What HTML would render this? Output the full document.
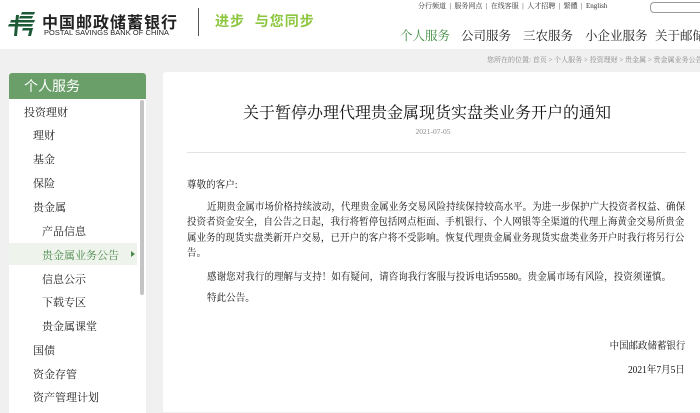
<!DOCTYPE html>
<html><head><meta charset="utf-8"><style>
*{margin:0;padding:0;box-sizing:border-box}
body{width:700px;height:409px;overflow:hidden;background:#f0f0f0;font-family:"Liberation Serif","Noto Serif CJK SC",serif;position:relative;color:#222}
.a{position:absolute;white-space:nowrap}
.hdr{position:absolute;left:0;top:0;width:700px;height:49px;background:#fff}
.sans{font-family:"Liberation Sans","Noto Sans CJK SC",sans-serif}
.side{position:absolute;left:9px;top:73px;width:137px;height:340px;background:#fff;border-radius:3px 3px 0 0;overflow:hidden}
.sh{height:26px;background:#6a9f6a;color:#fff;font-size:14px;line-height:26px;padding-left:15px;font-family:"Liberation Sans","Noto Sans CJK SC",sans-serif}
.si{position:absolute;font-size:11px;color:#222}
.main{position:absolute;left:163px;top:72px;width:537px;height:340px;background:#fff;border-radius:3px 0 0 0;overflow:hidden}
.l{position:absolute;left:24px;font-size:10.3px;letter-spacing:.1px;line-height:15.5px;color:#111;white-space:nowrap;transform:scaleX(.92);transform-origin:0 0}
.r{transform:scaleX(.92);transform-origin:100% 0}
</style></head><body>
<div class="hdr">
<svg class="a" style="left:8px;top:11px" width="28" height="26" viewBox="0 0 28 26">
<g fill="#1d5a38">
<polygon points="14,1 27,1 26,3.5 13,3.5"/>
<polygon points="12,5 25,5 24,7.5 11,7.5"/>
<polygon points="3,9 27,9 26,11.5 2,11.5"/>
<polygon points="1,13 25,13 24,15.5 0,15.5"/>
<polygon points="8,4 11,4 9,25 6,25"/>
<polygon points="15,17 25,17 24,19.5 14,19.5"/>
<polygon points="22,17 25,17 23,25 20,25"/>
</g></svg>
<div class="a sans" style="left:42px;top:9px;font-size:16px;font-weight:bold;letter-spacing:1px;color:#222">中国邮政储蓄银行</div>
<div class="a sans" style="left:44px;top:28px;font-size:7.4px;color:#222;letter-spacing:.1px">POSTAL SAVINGS BANK OF CHINA</div>
<div class="a" style="left:198px;top:8px;width:1px;height:28px;background:#555"></div>
<div class="a sans" style="left:215px;top:11px;font-size:14px;font-weight:bold;color:#8dc63f;letter-spacing:1px">进步&nbsp; 与您同步</div>
<div class="a" style="left:418px;top:1px;font-size:7px;color:#333">分行频道 &nbsp;|&nbsp; 服务网点 &nbsp;|&nbsp; 在线客服 &nbsp;|&nbsp; 人才招聘 &nbsp;|&nbsp; 繁體 &nbsp;|&nbsp; English</div>
<div class="a" style="left:650px;top:2px;width:60px;height:11px;border:1px solid #999;border-radius:4px"></div>
<div class="a" style="left:400px;top:26px;font-size:12.5px;color:#3c8a3c">个人服务</div>
<div class="a" style="left:461px;top:26px;font-size:12.5px;color:#222">公司服务</div>
<div class="a" style="left:523px;top:26px;font-size:12.5px;color:#222">三农服务</div>
<div class="a" style="left:585px;top:26px;font-size:12.5px;color:#222">小企业服务</div>
<div class="a" style="left:655px;top:26px;font-size:12.5px;color:#222">关于邮储</div>
</div>
<div class="a" style="left:487px;top:55px;font-size:7px;color:#888">您所在的位置: 首页 &gt; 个人服务 &gt; 投资理财 &gt; 贵金属 &gt; 贵金属业务公告</div>
<div class="side">
<div class="sh">个人服务</div>
<div class="a" style="left:0;top:170px;width:128px;height:22px;background:#eef3ec"></div>
<div class="a" style="left:131px;top:27px;width:4px;height:195px;background:#c4c4c4;border-radius:2px"></div>
<div class="si" style="left:15px;top:31px">投资理财</div>
<div class="si" style="left:24px;top:54px">理财</div>
<div class="si" style="left:24px;top:78px">基金</div>
<div class="si" style="left:24px;top:102px">保险</div>
<div class="si" style="left:24px;top:126px">贵金属</div>
<div class="si" style="left:33px;top:150px">产品信息</div>
<div class="si" style="left:33px;top:174px;color:#4a8a4a">贵金属业务公告</div>
<div class="a" style="left:122px;top:178px;width:0;height:0;border-left:4px solid #4a8a4a;border-top:3px solid transparent;border-bottom:3px solid transparent"></div>
<div class="si" style="left:33px;top:198px">信息公示</div>
<div class="si" style="left:33px;top:221px">下载专区</div>
<div class="si" style="left:33px;top:245px">贵金属课堂</div>
<div class="si" style="left:24px;top:269px">国债</div>
<div class="si" style="left:24px;top:293px">资金存管</div>
<div class="si" style="left:24px;top:316px">资产管理计划</div>
</div>
<div class="main">
<div class="a" style="left:80px;top:28px;font-size:16px;color:#111">关于暂停办理代理贵金属现货实盘类业务开户的通知</div>
<div class="a" style="left:0;width:540px;text-align:center;top:55px;font-size:7.5px;color:#888">2021-07-05</div>
<div class="a" style="left:24px;top:80px;width:499px;height:1px;background:#e2e2e2"></div>
<div class="l" style="top:106px">尊敬的客户:</div>
<div class="l" style="top:128px;left:44px">近期贵金属市场价格持续波动，代理贵金属业务交易风险持续保持较高水平。为进一步保护广大投资者权益、确保</div>
<div class="l" style="top:143px">投资者资金安全，自公告之日起，我行将暂停包括网点柜面、手机银行、个人网银等全渠道的代理上海黄金交易所贵金</div>
<div class="l" style="top:159px">属业务的现货实盘类新开户交易，已开户的客户将不受影响。恢复代理贵金属业务现货实盘类业务开户时我行将另行公</div>
<div class="l" style="top:174px">告。</div>
<div class="l" style="top:198px;left:44px">感谢您对我行的理解与支持！如有疑问，请咨询我行客服与投诉电话95580。贵金属市场有风险，投资须谨慎。</div>
<div class="l" style="top:219px;left:44px">特此公告。</div>
<div class="a r" style="right:15px;top:265px;font-size:10.3px;color:#111">中国邮政储蓄银行</div>
<div class="a r" style="right:15px;top:289px;font-size:10.3px;color:#111">2021年7月5日</div>
</div>
</body></html>
